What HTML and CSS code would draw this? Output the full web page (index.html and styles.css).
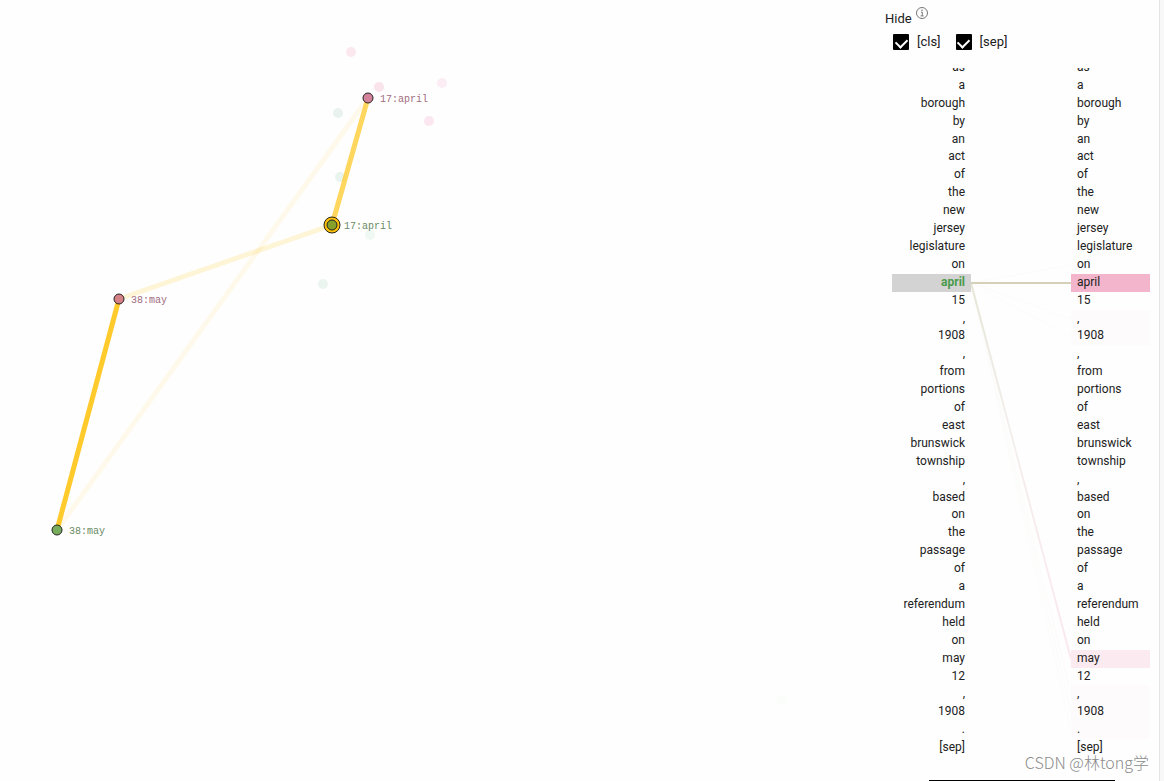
FILE: index.html
```
<!DOCTYPE html>
<html lang="en">

<head>
  <meta charset="UTF-8">
  <meta name="viewport" content="width=device-width, initial-scale=1.0">
  <title>Attention view</title>
  <link rel="stylesheet" href="styles.css">
</head>

<body>
  <main class="scatter">
    <svg class="plot" width="880" height="781" role="img" aria-label="Token embeddings">
      <!-- faded tokens -->
      <g class="faded">
        <circle cx="351" cy="52" r="5" fill="#fbe8ef" />
        <circle cx="379" cy="87" r="5" fill="#fae3ea" />
        <circle cx="442" cy="83" r="5" fill="#fcedf4" />
        <circle cx="429" cy="121" r="5" fill="#fce6f0" />
        <circle cx="338" cy="113" r="5" fill="#e9f2ef" />
        <circle cx="340" cy="177" r="5" fill="#e8f4ee" />
        <circle cx="370" cy="235" r="5" fill="#eff8f3" />
        <circle cx="323" cy="284" r="5" fill="#eaf5f0" />
        <circle cx="782" cy="700" r="5" fill="#fafdf9" />
      </g>

      <!-- attention links -->
      <g class="links">
        <line x1="57" y1="530" x2="368" y2="98" stroke-opacity="0.08" />
        <line x1="119" y1="299" x2="332" y2="225" stroke-opacity="0.16" />
        <line x1="332" y1="225" x2="368" y2="98" stroke-opacity="0.65" />
        <line x1="57" y1="530" x2="119" y2="299" stroke-opacity="0.85" />
      </g>

      <g class="nodes">
        <circle cx="368" cy="98" r="5" fill="#d4829a" />
        <circle cx="119" cy="299" r="5" fill="#d57f86" />
        <circle cx="57" cy="530" r="5" fill="#78ab5c" />
        <circle cx="332" cy="225" r="8" fill="#ffc107" />
        <circle cx="332" cy="225" r="5" fill="#86a02c" />
      </g>

      <text class="key" x="380" y="102">17:april</text>
      <text class="query" x="344" y="229">17:april</text>
      <text class="key" x="131" y="303">38:may</text>
      <text class="query" x="69" y="534">38:may</text>
    </svg>
  </main>

  <aside class="panel">
    <div class="hide-title">
      <span>Hide</span>
      <svg class="info" width="14" height="14" viewBox="0 0 14 14">
        <circle cx="7" cy="7" r="5.5" fill="none" stroke="#777" />
        <path d="M6 6.2h1.3v3.6M5.6 9.9h3" fill="none" stroke="#777" />
        <circle cx="7" cy="4.2" r="0.8" fill="#777" />
      </svg>
    </div>
    <div class="hide-options">
      <label><input type="checkbox" checked>[cls]</label>
      <label><input type="checkbox" checked>[sep]</label>
    </div>

    <div class="attention">
      <ul class="tokens left" id="left"></ul>
      <svg class="connections" width="100" height="698" viewBox="0 0 100 698">
        <defs>
          <linearGradient id="fade" gradientUnits="userSpaceOnUse" x1="0" y1="224" x2="100" y2="600">
            <stop offset="0" stop-color="#e6e6d8" />
            <stop offset="0.4" stop-color="#f4efec" />
            <stop offset="1" stop-color="#fbe9ef" />
          </linearGradient>
        </defs>
        <g stroke="#fbfbfa">
          <path d="M0 224L100 206M0 224L100 260M0 224L100 278M0 224L100 636M0 224L100 654M0 224L100 672" />
        </g>
        <path d="M0 224L100 600" stroke="url(#fade)" stroke-width="2" />
        <path d="M0 224H100" stroke="#d4d1b8" stroke-width="2" />
      </svg>
      <ul class="tokens right" id="right"></ul>
    </div>
    <div class="next-bar"></div>
  </aside>

  <div class="watermark">CSDN @林tong学</div>

  <script>
    const tokens = ['as', 'a', 'borough', 'by', 'an', 'act', 'of', 'the', 'new', 'jersey',
      'legislature', 'on', 'april', '15', ',', '1908', ',', 'from', 'portions', 'of',
      'east', 'brunswick', 'township', ',', 'based', 'on', 'the', 'passage', 'of', 'a',
      'referendum', 'held', 'on', 'may', '12', ',', '1908', '.', '[sep]'];

    const leftClass = { 12: 'selected' };
    const rightClass = { 12: 'strong', 14: 'faint', 15: 'faint', 33: 'weak', 35: 'faint', 36: 'faint', 37: 'faint' };

    function fill(id, classes) {
      const list = document.getElementById(id);
      tokens.forEach((token, i) => {
        const li = document.createElement('li');
        li.textContent = token;
        if (classes[i]) li.className = classes[i];
        list.appendChild(li);
      });
    }

    fill('left', leftClass);
    fill('right', rightClass);
  </script>
</body>

</html>
```

FILE: styles.css
```
* {
  box-sizing: border-box;
}

body {
  margin: 0;
  display: flex;
  height: 100vh;
  overflow: hidden;
  background: #fefefe;
  color: #212121;
  font-family: Roboto, "Noto Sans CJK SC", sans-serif;
  font-size: 12px;
  position: relative;
}

.scatter {
  flex: 1;
  min-width: 0;
  overflow: hidden;
}

.plot {
  display: block;
}

.links line {
  stroke: #ffc107;
  stroke-width: 5;
}

.nodes circle {
  stroke: #222;
  stroke-width: 1;
}

.plot text {
  font-family: "Liberation Mono", monospace;
  font-size: 10px;
}

.key {
  fill: #a06c80;
}

.query {
  fill: #6a8a62;
}

.panel {
  flex: none;
  width: 280px;
  margin-right: 4px;
  border-right: 1px solid #e4e4e4;
  box-shadow: 4px 0 0 #f8f8f8;
}

.hide-title {
  display: flex;
  align-items: flex-start;
  gap: 3px;
  height: 34px;
  padding: 6px 0 0 5px;
  font-size: 13px;
}

.hide-title span {
  line-height: 26px;
}

.hide-options {
  display: flex;
  gap: 15px;
  padding-left: 13px;
  font-size: 13px;
  line-height: 16px;
}

.hide-options label {
  display: flex;
  align-items: center;
  gap: 8px;
}

.hide-options input {
  appearance: none;
  display: flex;
  justify-content: center;
  width: 16px;
  height: 16px;
  margin: 0;
  border-radius: 1px;
  background: #000;
}

.hide-options input::before {
  content: "";
  width: 9px;
  height: 6px;
  margin-top: 4px;
  border: solid #fff;
  border-width: 0 0 2px 2px;
  transform: rotate(-45deg);
}

/* scrolled list, the first row is cut by the top edge */
.attention {
  display: flex;
  align-items: flex-end;
  height: 689px;
  margin: 18px 9px 0 12px;
  overflow: hidden;
}

.tokens {
  flex: 1;
  display: grid;
  grid-template-rows: repeat(39, 1fr);
  height: 698px;
  margin: 0;
  padding: 0;
  list-style: none;
  line-height: 17px;
}

.tokens li {
  padding: 0 6px;
}

.left {
  text-align: right;
}

.connections {
  flex: none;
}

.selected {
  background: #d3d3d3;
  color: #4b9a4b;
  font-weight: bold;
}

.strong {
  background: #f3b5cb;
}

.weak {
  background: #fbebf1;
}

.faint {
  background: #fefbfc;
}

.next-bar {
  height: 20px;
  margin: 23px 44px 0 49px;
  background: #000;
}

.watermark {
  position: absolute;
  right: 15px;
  bottom: 7px;
  color: #8c8c8c;
  font-family: "Noto Sans CJK SC", sans-serif;
  font-size: 16px;
  font-weight: 300;
  line-height: 24px;
}
```
